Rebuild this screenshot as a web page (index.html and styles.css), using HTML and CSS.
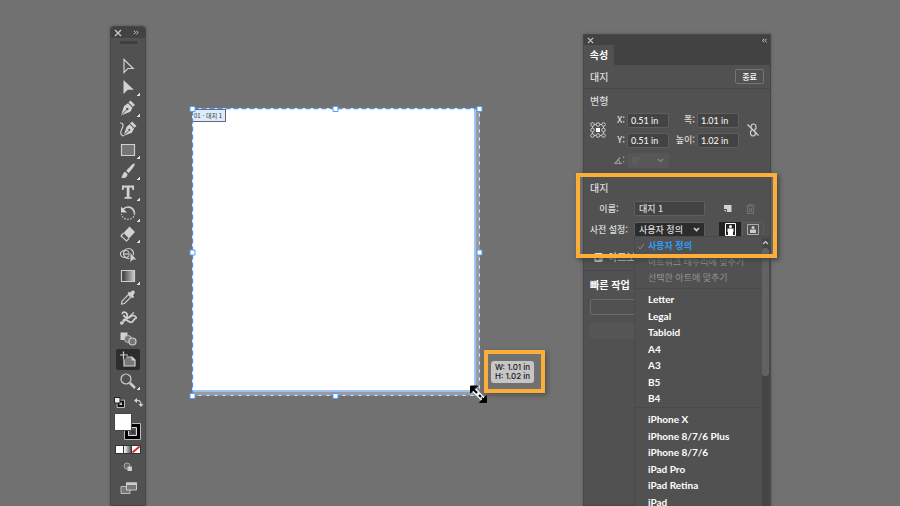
FILE: index.html
```html
<!DOCTYPE html>
<html lang="ko">
<head>
<meta charset="utf-8">
<title>대지 1</title>
<link rel="stylesheet" href="styles.css">
</head>
<body>
<div class="app">
  <aside class="toolbar" aria-label="도구">
    <div class="bar toolbar-bar">
      <button class="plain" aria-label="닫기"><svg width="8" height="8" viewBox="0 0 8 8"><path class="line" d="M1 1l6 6M7 1l-6 6"/></svg></button>
      <button class="plain" aria-label="확장"><svg width="6" height="5" viewBox="0 0 6 6"><path class="line" d="M.5 1l2 2-2 2M3.500 1l2 2-2 2"/></svg></button>
    </div>
    <div class="grip"></div>
    <div class="tools">
      <button class="tool" aria-label="선택"><svg viewBox="0 0 20 20"><path class="line" d="M6 3.500v13l3.800-4h5.400z"/></svg></button>
      <button class="tool more" aria-label="직접 선택"><svg viewBox="0 0 20 20"><path class="solid" d="M5.500 3v14l4.300-4.300h6z"/></svg></button>
      <button class="tool more" aria-label="펜"><svg viewBox="0 0 20 20"><path class="solid" d="M12.500 2.500l4.500 4.500-2 1.800L10.500 4.500zM10 5.300l4.500 4.500-2.200 4L3 17.500 6 8z"/><path class="dark" d="M3.500 17l5.300-5.500"/><circle class="hole" cx="9.300" cy="11" r="1.200"/></svg></button>
      <button class="tool" aria-label="곡률"><svg viewBox="0 0 20 20"><path class="solid" d="M14 2.500l4.500 4.500-2 1.800L12 4.500zM11.500 5.300l4.500 4.500-2.200 4L5.500 17l3-9z"/><path class="dark" d="M6 16.500l4.800-5"/><circle class="hole" cx="11.300" cy="10.800" r="1.100"/><path class="line" d="M2 4c4 0 3.500 3 1.800 6S2 16.500 6 17"/></svg></button>
      <button class="tool more" aria-label="사각형"><svg viewBox="0 0 20 20"><path class="line filled" d="M3.500 4.500h13v11h-13z"/></svg></button>
      <button class="tool more" aria-label="브러시"><svg viewBox="0 0 20 20"><path class="solid" d="M16.500 2.500c1.500 1-4 8-6 9.500L8.200 9.800c2-2.300 7-8.300 8.300-7.300zM7.300 10.700l2.200 2.200C9.500 17 5 17.500 3 16.500c2.200-1.500 1-4.500 4.300-5.800z"/></svg></button>
      <button class="tool more" aria-label="문자"><svg viewBox="0 0 20 20"><path class="solid" d="M4 3.500h12V8h-1.500L14 5.500h-2.500V15h2.200v1.800H6.500V15h2.200V5.500H6L5.500 8H4z"/></svg></button>
      <button class="tool more" aria-label="회전"><svg viewBox="0 0 20 20"><path class="line thick" d="M5 6.500c4-4.500 11-2.500 11.500 4"/><path class="solid" d="M3 3.500v6h6z"/><path class="line" stroke-dasharray="1.500 1.500" d="M16.500 10.500c0 7.500-12 8-13 .5"/></svg></button>
      <button class="tool more" aria-label="지우개"><svg viewBox="0 0 20 20"><path class="solid" d="M11.500 2.500l5.500 5.500-6 6.500-5.500-5.500z"/><path class="line" d="M5.500 9L3 12l5.500 5 2.500-2.500"/></svg></button>
      <button class="tool" aria-label="도형 구성"><svg viewBox="0 0 20 20"><circle class="line" cx="10.500" cy="8.500" r="5"/><ellipse class="line" cx="7" cy="9" rx="4.500" ry="3.500"/><path class="line" d="M5 9h7"/><path class="solid outlined" d="M12 7v11.500l2.700-3.500h4.500z"/></svg></button>
      <button class="tool more" aria-label="그레이디언트"><svg viewBox="0 0 20 20"><defs><linearGradient id="ramp"><stop stop-color="#333"/><stop offset="1" stop-color="#ccc"/></linearGradient></defs><path fill="url(#ramp)" stroke="#cfcfcf" stroke-width="1.200" d="M3.500 4.500h13v11h-13z"/></svg></button>
      <button class="tool" aria-label="스포이드"><svg viewBox="0 0 20 20"><path class="line" d="M10.500 7.500l2.500 2.500-6.500 6.500-3 .5.500-3z"/><path class="solid" d="M9.500 6l1.300-1.300 1.200 1c3-4.500 7-1.500 3 2.800l1.200 1.500-1.500 1.200z"/></svg></button>
      <button class="tool" aria-label="퍼펫 뒤틀기"><svg viewBox="0 0 20 20"><path class="line thick" d="M4 6c1-3 4-2 5 0s-1 4 1 4 3-2.500 5-2.500 2.500 1.500 3.500 1.500M5 13c1-3 3-1.500 5 0s4 2 5 0 1.500-3 4-3M5.500 7c1 2 2 3 4 3"/><path class="line" d="M3 16L16 4.500"/><circle class="solid" cx="3.800" cy="15" r="1.800"/></svg></button>
      <button class="tool" aria-label="블렌드"><svg viewBox="0 0 20 20"><path class="solid" d="M2.500 3.500h7v7.500h-7z"/><circle cx="10" cy="10" r="3.500" fill="#777" stroke="#bbb"/><circle class="line filled" cx="14.500" cy="12.500" r="3.500"/></svg></button>
      <button class="tool active" aria-label="대지" aria-pressed="true"><svg viewBox="0 0 20 20"><path class="line" d="M5.500 1.500v8M2 5h8"/><path fill="#777" stroke="#d0d0d0" stroke-width="1.200" d="M8.500 7H14l3 3v6H6V9.500"/><path class="solid" d="M13.500 6.500v4H17.500z"/></svg></button>
      <button class="tool more" aria-label="돋보기"><svg viewBox="0 0 20 20"><circle class="line" cx="8" cy="8" r="5"/><path class="line handle" d="M12 12l5 5"/></svg></button>
    </div>
    <div class="swatch-actions">
      <button class="plain" aria-label="초기값"><svg width="12" height="12" viewBox="0 0 12 12"><path d="M5.500 5.500h4.500v4.500H5.500z" fill="none" stroke="#ddd" stroke-width="3.500"/><path d="M5.500 5.500h4.500v4.500H5.500z" fill="none" stroke="#111" stroke-width="2"/><path d="M1.500 1.500h5.500v5.500H1.500z" fill="#eee" stroke="#222"/></svg></button>
      <button class="plain" aria-label="칠과 선 교체"><svg width="11" height="11" viewBox="0 0 11 11"><path class="line" d="M3 3.500c4-.5 5 1 5 5"/><path class="solid" d="M1 3.500L4 1v5zM5.500 7h5L8 10z"/></svg></button>
    </div>
    <svg class="swatches" width="28" height="28" viewBox="0 0 28 28" aria-label="칠과 선"><path d="M10.500 10.500h16v16h-16z" fill="#000" stroke="#bbb"/><path d="M14.500 14.500h8v8h-8z" fill="#555" stroke="#ddd"/><path d="M17.500 17.500h3v3h-3z" fill="#333"/><path d="M.5.500h17v17H.5z" fill="#fff" stroke="#444"/></svg>
    <svg class="modes" width="26" height="9" viewBox="0 0 26 9"><defs><linearGradient id="mode"><stop stop-color="#fff"/><stop offset="1" stop-color="#555"/></linearGradient></defs><path d="M0 0h26v9H0z" fill="#333"/><path d="M1 1h7v7H1z" fill="#fff"/><path d="M9 1h7v7H9z" fill="url(#mode)"/><path d="M17 1h8v7h-8z" fill="#fff"/><path d="M17.500 7.500l7-6" stroke="#e2231a" stroke-width="1.800"/></svg>
    <button class="plain draw" aria-label="그리기 모드"><svg width="10" height="10" viewBox="0 0 10 10"><circle cx="4" cy="4" r="3" fill="#666" stroke="#aaa"/><path d="M4.500 4.500h4.500V9H4.500z" fill="#ccc"/></svg></button>
    <button class="plain" aria-label="화면 모드"><svg width="17" height="12" viewBox="0 0 17 12"><path d="M1 4.500h9v7H1z" fill="#777" stroke="#bbb"/><path d="M6.500 1h10v7h-10z" fill="#777" stroke="#ccc"/><path d="M6 .5h11v2.500H6z" fill="#ccc"/></svg></button>
  </aside>

  <main class="canvas">
    <div class="artboard"><span class="artboard-name">01 - 대지 1</span></div>
    <svg class="selection" width="310" height="310" viewBox="0 0 310 310">
      <g fill="none"><path stroke="#e4e4e4" d="M10.500 10.500h287v287h-287z"/><path stroke="#4a8cf0" stroke-width="1.300" stroke-dasharray="5 3" d="M10.500 297.500v-287h287"/><path stroke="#6a93cf" stroke-dasharray="5 3" d="M297.500 10.500v287h-287"/></g>
      <g fill="#fff" stroke="#5c9cf2"><path d="M8 8.500h5v5H8zM151 8.500h5v5h-5zM295 8.500h5v5h-5zM8 152h5v5H8zM295 152h5v5h-5zM8 295.500h5v5H8zM151 295.500h5v5h-5z"/></g>
      <path d="M292 292l10 10" stroke="#f2f2f2" stroke-width="5"/><path d="M290 290l5 5M297 297l2 2M300 300l4 4" stroke="#000" stroke-width="2"/><path d="M288.500 289.500v-1.500h7l-7 7zM304.500 304.500v-7l-7 7z" fill="#000" stroke="#000"/>
    </svg>
    <div class="measure-frame"><div class="measure">W: 1.01 in<br>H: 1.02 in</div></div>
  </main>

  <aside class="panel">
    <div class="bar panel-bar">
      <button class="plain" aria-label="패널 닫기"><svg width="7" height="7" viewBox="0 0 8 8"><path class="line" d="M1 1l6 6M7 1l-6 6"/></svg></button>
      <button class="plain" aria-label="축소"><svg width="5" height="5" viewBox="0 0 6 6"><path class="line" d="M2.500 1l-2 2 2 2M5.500 1l-2 2 2 2"/></svg></button>
    </div>
    <div class="tabs"><button class="tab">속성</button></div>
    <header class="panel-head"><h2>대지</h2><button class="exit">종료</button></header>
    <section class="transform">
      <h2>변형</h2>
      <div class="transform-grid">
        <svg class="reference" width="16" height="16" viewBox="0 0 16 16"><g fill="none" stroke="#c8c8c8"><path d="M4 2.500h2M10 2.500h2M4 13.500h2M10 13.500h2M2.500 4v2M2.500 10v2M13.500 4v2M13.500 10v2"/><circle cx="2.500" cy="2.500" r="1.800"/><circle cx="8" cy="2.500" r="1.800"/><circle cx="13.500" cy="2.500" r="1.800"/><circle cx="2.500" cy="8" r="1.800"/><circle cx="13.500" cy="8" r="1.800"/><circle cx="2.500" cy="13.500" r="1.800"/><circle cx="8" cy="13.500" r="1.800"/><circle cx="13.500" cy="13.500" r="1.800"/></g><path d="M6 6h4v4H6z" fill="#fff"/></svg>
        <label for="x">X:</label><input id="x" value="0.51 in">
        <label for="w">폭:</label><input id="w" value="1.01 in">
        <button class="plain link" aria-label="비율 제한"><svg width="12" height="14" viewBox="0 0 12 14"><path class="line" d="M4 5.500V4c0-4 5-4 5 0v1.500L7 7.500M8.500 8.500V10c0 4-5 4-5 0V8.500l2-2"/><path class="line" d="M.5 1.500l11 11"/></svg></button>
        <label for="y">Y:</label><input id="y" value="0.51 in">
        <label for="h">높이:</label><input id="h" value="1.02 in">
        <label for="angle" class="angle" aria-label="각도"><svg width="8" height="7" viewBox="0 0 8 7"><path class="line" d="M6 .5l-5 6h7M4 3c1.500.5 2 2 2 3.500"/></svg>:</label>
        <div class="picker off"><select id="angle" disabled><option>0°</option></select><svg width="7" height="5" viewBox="0 0 7 5"><path class="line" d="M1 1l2.500 2.500L6 1"/></svg></div>
      </div>
    </section>
    <section class="artboard-settings">
      <h2>대지</h2>
      <div class="setting"><label class="short" for="name">이름:</label><input id="name" value="대지 1">
        <div class="actions">
          <button class="plain" aria-label="새 대지"><svg width="9" height="9" viewBox="0 0 9 9"><path class="solid" d="M1 1h7.500v7H4V5H1z"/><path class="solid" d="M1 6h2v2z"/></svg></button>
          <button class="plain dim" aria-label="삭제" disabled><svg width="9" height="10" viewBox="0 0 9 10"><path class="line" d="M.5 2h8M3 2V.5h3V2M1.500 2.500v7h6v-7M3.500 4v4M5.500 4v4"/></svg></button>
        </div>
      </div>
      <div class="setting"><label for="preset">사전 설정:</label>
        <div class="picker preset"><select id="preset"><option>사용자 정의</option></select><svg width="7" height="5" viewBox="0 0 7 5"><path class="line thick" d="M1 1l2.500 2.500L6 1"/></svg></div>
        <div class="orientation">
          <button class="orient chosen" aria-label="세로"><svg width="11" height="13" viewBox="0 0 11 13"><path d="M.5.500h10v12H.5z" fill="none" stroke="#fff"/><circle cx="5.500" cy="3.500" r="1.500" fill="#fff"/><path d="M2.500 5.500h6V9H8v3H3V9h-.5z" fill="#fff"/></svg></button>
          <button class="orient" aria-label="가로"><svg width="12" height="11" viewBox="0 0 12 11"><path d="M.5.500h11v10H.5z" fill="none" stroke="#aaa"/><circle cx="6" cy="3.500" r="1.500" fill="#ccc"/><path d="M3 5.500h6v3.500H3z" fill="#ccc"/></svg></button>
        </div>
        <div class="menu">
          <ul class="menu-list">
            <li class="picked"><svg width="8" height="7" viewBox="0 0 8 7"><path fill="none" stroke="#8a8a8a" d="M1 3.500l2 2.500L7 1"/></svg>사용자 정의</li>
            <li class="unavailable">아트워크 테두리에 맞추기</li>
            <li class="unavailable">선택한 아트에 맞추기</li>
          </ul>
          <ul class="menu-list print"><li>Letter</li><li>Legal</li><li>Tabloid</li><li>A4</li><li>A3</li><li>B5</li><li>B4</li></ul>
          <ul class="menu-list device"><li>iPhone X</li><li>iPhone 8/7/6 Plus</li><li>iPhone 8/7/6</li><li>iPad Pro</li><li>iPad Retina</li><li>iPad</li></ul>
          <div class="scroll"><svg width="7" height="5" viewBox="0 0 7 5"><path class="line" d="M1 4l2.500-2.500L6 4"/></svg><div class="thumb"></div></div>
        </div>
      </div>
      <label class="check"><input type="checkbox" checked>아트보드</label>
      <div class="highlight"></div>
    </section>
    <section class="quick">
      <h2>빠른 작업</h2>
      <button class="quick-button" aria-label="작업"></button>
      <button class="quick-button muted" aria-label="작업" disabled></button>
    </section>
  </aside>
</div>
</body>
</html>
```
FILE: styles.css
```css
* { box-sizing: border-box; }
body {
  margin: 0;
  background: #717171;
  color: #dcdcdc;
  font: 500 10px/14px "Noto Sans CJK KR", sans-serif;
}
h2, ul { margin: 0; padding: 0; font: inherit; list-style: none; }
button, input, select { font: inherit; color: inherit; margin: 0; padding: 0; }
svg { display: block; }
.line { fill: none; stroke: #cfcfcf; stroke-width: 1.2; }
.thick { stroke-width: 1.7; }
.handle { stroke-width: 2.5; }
.filled { fill: #757575; }
.solid { fill: #d2d2d2; }
.dark { stroke: #555; fill: none; }
.hole { fill: #555; }
.outlined { stroke: #505050; }
.plain { display: flex; border: 0; background: none; }
.app {
  display: flex;
  height: 100vh;
  padding: 0 129px 0 110px;
  overflow: hidden;
}
.bar {
  display: flex;
  justify-content: space-between;
  align-items: center;
  background: #424242;
}

.toolbar {
  display: flex;
  flex-direction: column;
  align-items: center;
  flex: none;
  width: 36px;
  margin-top: 26px;
  border: 1px solid #464646;
  border-radius: 4px 4px 0 0;
  background: #515151;
  box-shadow: 0 0 3px #505050;
}
.toolbar-bar { width: 100%; height: 11px; padding: 0 6px 0 3px; border-radius: 4px 4px 0 0; }
.grip { width: 17px; height: 3px; margin: 3px 0 11px; background: repeating-linear-gradient(90deg, #3b3b3b 0 1px, #424242 1px 2px); }
.tools { display: grid; grid-auto-rows: 21px; }
.tool {
  position: relative;
  display: grid;
  place-items: center;
  width: 24px;
  border: 0;
  border-radius: 2px;
  background: none;
}
.tool svg { width: 20px; height: 20px; }
.tool.active { background: #2d2d2d; }
.more::after {
  content: "";
  position: absolute;
  right: 0;
  bottom: 1px;
  width: 3px;
  height: 3px;
  background: linear-gradient(135deg, transparent 40%, #ddd 50%);
}
.swatch-actions { display: flex; gap: 8px; align-items: center; height: 12px; margin: 5px 0; }
.swatches { flex: none; margin-bottom: 4px; }
.modes { flex: none; margin-bottom: 8px; }
.draw { margin-bottom: 10px; }

.canvas { position: relative; flex: 1; }
.artboard {
  position: absolute;
  left: 46px;
  top: 108px;
  width: 287px;
  height: 288px;
  border: solid #9b9b9b;
  border-width: 0 3px 4px 0;
  background: #fff;
  box-shadow: inset -2px -2px #9dc3f5;
}
.artboard-name {
  display: block;
  width: 34px;
  margin-top: 1px;
  padding-left: 1px;
  border: 1px solid #667;
  background: #dcecfa;
  color: #333;
  font-size: 6px;
  font-weight: 400;
  line-height: 11px;
  white-space: nowrap;
}
.selection { position: absolute; left: 36px; top: 98px; }
.measure-frame {
  position: absolute;
  left: 338px;
  top: 350px;
  padding: 7px 7px 6px 3px;
  border: 4px solid #fbae39;
  box-shadow: 2px 2px 5px #505050;
}
.measure {
  width: 43px;
  padding: 2px 0 2px 4px;
  border-radius: 3px;
  background: #c6c6c6;
  color: #161616;
  font: 500 8px/9px Inter, sans-serif;
  white-space: nowrap;
}

.panel {
  flex: none;
  width: 188px;
  margin-top: 34px;
  border: 1px solid #484848;
  background: #515151;
  box-shadow: 0 0 3px #555;
}
.panel-bar { height: 10px; padding: 0 3px; }
.tabs { display: flex; height: 20px; background: #424242; }
.tab { width: 30px; border: 0; background: #515151; color: #fff; font-weight: 700; }
.panel-head {
  display: flex;
  justify-content: space-between;
  align-items: center;
  height: 24px;
  padding: 0 6px;
  border-bottom: 1px solid #484848;
}
.exit {
  width: 29px;
  height: 15px;
  border: 1px solid #757575;
  border-radius: 2px;
  background: none;
  color: #fff;
  font-size: 8px;
  line-height: 12px;
}
.transform { height: 84px; padding: 5px 6px 0; }
.transform-grid {
  display: grid;
  grid-template-columns: 16px 17px 42px 24px 42px 1fr;
  grid-auto-rows: 16px;
  gap: 4px 2px;
  align-items: center;
  margin-top: 4px;
}
.transform-grid .reference, .link { grid-row: 1 / 3; }
.link { grid-column: 6; margin-left: 6px; }
.transform-grid label { font-size: 9px; text-align: right; white-space: nowrap; }
.transform-grid .angle { grid-column: 2; display: flex; justify-content: flex-end; align-items: center; opacity: 0.6; }
.off { opacity: 0.4; }
input:not([type]), .picker {
  width: 100%;
  height: 15px;
  padding: 0 4px;
  border: 1px solid #5e5e5e;
  border-radius: 2px;
  background: #434343;
  font-size: 9px;
}
.transform-grid input { padding: 0 0 0 3px; font-family: Lato, sans-serif; color: #f0f0f0; }
.picker { display: flex; align-items: center; }
.picker select { flex: 1; min-width: 0; height: 13px; border: 0; background: none; appearance: none; font-size: 9px; opacity: 1; }
.transform-grid .picker { background: #606060; }
.transform-grid select { color: #888; }
.picker.preset { background: #2c2c2c; }
.artboard-settings { position: relative; height: 98px; padding: 8px 6px 0; border-bottom: 1px solid #484848; }
.setting {
  position: relative;
  display: grid;
  grid-template-columns: 38px 71px 1fr;
  column-gap: 6px;
  align-items: center;
  height: 21px;
}
.artboard-settings h2 { margin-bottom: 3px; }
.setting label { justify-self: end; font-size: 9px; white-space: nowrap; }
.setting .short { justify-self: center; }
.actions { display: flex; gap: 14px; padding-left: 12px; }
.dim { opacity: 0.25; }
.orientation { display: flex; gap: 1px; padding-left: 8px; }
.orient {
  display: grid;
  place-items: center;
  width: 22px;
  height: 15px;
  border: 1px solid #5c5c5c;
  background: none;
}
.orient.chosen { background: #222; border-color: #222; }
.menu {
  position: absolute;
  left: 44px;
  right: -6px;
  top: 17px;
  padding: 1px 7px 0 0;
  border: 1px solid #494949;
  background: #515151;
  z-index: 1;
}
.menu-list { display: grid; grid-auto-rows: 16px; padding-bottom: 2px; line-height: 16px; color: #fff; }
.menu-list li { padding-left: 13px; white-space: nowrap; }
.menu-list .picked { display: flex; align-items: center; gap: 3px; padding-left: 2px; color: #2e9df5; font-size: 9px; font-weight: 700; }
.menu-list .unavailable { color: #959595; font-size: 9px; font-weight: 400; }
.print, .device { font-family: Lato, sans-serif; font-weight: 700; }
.print { height: 120px; grid-auto-rows: 1fr; padding: 2px 0 0; border: solid #4a4a4a; border-width: 1px 0; }
.device { height: 102px; grid-auto-rows: 1fr; padding: 3px 0 0; }
.scroll { position: absolute; top: 1px; right: 0; bottom: 0; width: 7px; background: #454545; }
.scroll svg { margin: 2px 0 3px; }
.thumb { height: 128px; border-radius: 3px; background: #626262; }
.check { display: flex; align-items: center; gap: 5px; margin-top: 10px; padding-left: 4px; }
.check input { width: 9px; height: 9px; accent-color: #ddd; }
.highlight {
  position: absolute;
  left: -8px;
  right: -7px;
  top: 0;
  height: 85px;
  border: 4px solid #fbae39;
  box-shadow: 2px 2px 5px #404040;
  z-index: 2;
}
.quick { padding: 7px 6px 0; }
.quick h2 { margin-bottom: 7px; color: #fff; font-weight: 700; }
.quick-button { display: block; width: 100%; height: 16px; margin-bottom: 8px; border: 1px solid #6b6b6b; border-radius: 2px; background: none; }
.quick-button.muted { border: 0; background: #565656; }
```
